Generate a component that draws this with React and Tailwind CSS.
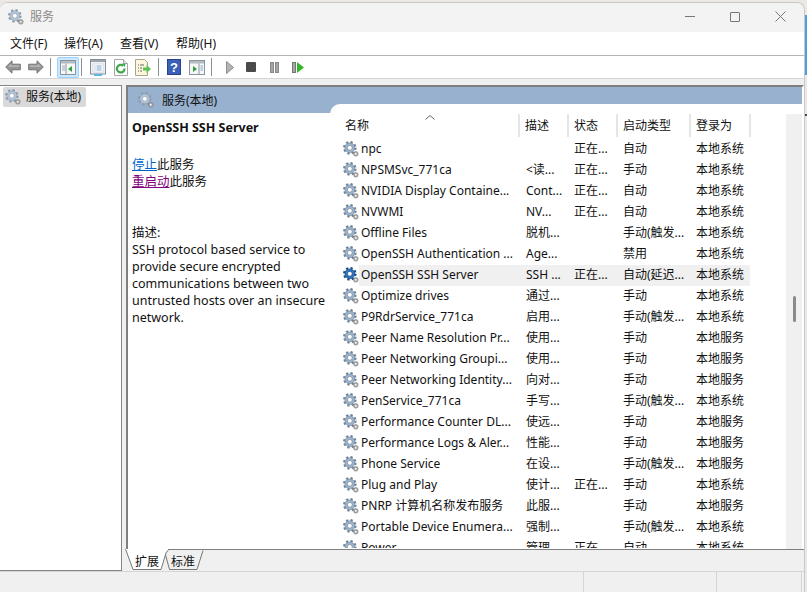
import React from 'react';

const FONT = "font-['Segoe_UI','Noto_Sans','Noto_Sans_CJK_SC',sans-serif]";

const rows = [
    ['npc', '', '正在...', '自动', '本地系统'],
    ['NPSMSvc_771ca', '<读...', '正在...', '手动', '本地系统'],
    ['NVIDIA Display Containe...', 'Cont...', '正在...', '自动', '本地系统'],
    ['NVWMI', 'NV...', '正在...', '自动', '本地系统'],
    ['Offline Files', '脱机...', '', '手动(触发...', '本地系统'],
    ['OpenSSH Authentication ...', 'Age...', '', '禁用', '本地系统'],
    ['OpenSSH SSH Server', 'SSH ...', '正在...', '自动(延迟...', '本地系统'],
    ['Optimize drives', '通过...', '', '手动', '本地系统'],
    ['P9RdrService_771ca', '启用...', '', '手动(触发...', '本地系统'],
    ['Peer Name Resolution Pr...', '使用...', '', '手动', '本地服务'],
    ['Peer Networking Groupi...', '使用...', '', '手动', '本地服务'],
    ['Peer Networking Identity...', '向对...', '', '手动', '本地服务'],
    ['PenService_771ca', '手写...', '', '手动(触发...', '本地系统'],
    ['Performance Counter DL...', '使远...', '', '手动', '本地服务'],
    ['Performance Logs & Aler...', '性能...', '', '手动', '本地服务'],
    ['Phone Service', '在设...', '', '手动(触发...', '本地服务'],
    ['Plug and Play', '使计...', '正在...', '手动', '本地系统'],
    ['PNRP 计算机名称发布服务', '此服...', '', '手动', '本地服务'],
    ['Portable Device Enumera...', '强制...', '', '手动(触发...', '本地系统'],
    ['Power', '管理...', '正在...', '自动', '本地系统'],
];

const Gear = ({ size = 16, selected = false, muted = false, className = '' }) => {
    const main = selected ? '#2f74bd' : muted ? '#b4c6d8' : '#9db4cc';
    const dark = selected ? '#174a86' : muted ? '#8a9bad' : '#6f8398';
    return (
        <svg width={size} height={size} viewBox="0 0 16 16" className={`shrink-0 ${className}`}>
            <circle cx="6.800" cy="6.800" r="5.600" fill="none" stroke={dark} strokeWidth="2.400" strokeDasharray="2.200 2.200" />
            <circle cx="6.800" cy="6.800" r="4.900" fill={main} stroke={dark} strokeWidth=".6" />
            <circle cx="6.800" cy="6.800" r="2.400" fill="#fff" stroke={dark} strokeWidth=".6" />
            <circle cx="12.800" cy="12.800" r="2.400" fill="#a9a9a9" stroke="#777" strokeWidth=".5" />
            <circle cx="12.800" cy="12.800" r=".9" fill="#fff" />
        </svg>
    );
};

const Arrow = ({ flip = false, className = '' }) => (
    <svg width="16" height="14" viewBox="0 0 16 14" className={`${flip ? '-scale-x-100' : ''} ${className}`}>
        <path d="M.7 7 7 .8v3.400h8.300v5.600H7v3.400z" fill="#949494" stroke="#757575" />
        <path d="M3 7 6.300 3.800v1.600h8v1.400H5z" fill="#bdbdbd" />
    </svg>
);

const Sep = ({ className = '' }) => <div className={`w-px h-[18px] bg-[#8f8f8f] shrink-0 ${className}`} />;

const WindowIcon = ({ children }) => (
    <svg width="16" height="15" viewBox="0 0 16 15">
        <rect x=".5" y=".5" width="15" height="14" fill="#f6f7f8" stroke="#8b949c" />
        <rect x="1" y="1" width="14" height="2.500" fill="#b4bcc3" />
        {children}
    </svg>
);

const Toolbar = () => (
    <div className="flex items-center h-[23px] bg-white border-b border-[#d6d6d6] pl-[5px] shrink-0">
        <Arrow />
        <Arrow flip className="ml-[7px]" />
        <Sep className="ml-[6px]" />
        <div className="flex items-center justify-center w-[22px] h-[21px] ml-[6px] bg-[#cce8ff] border border-[#99d1ff] rounded-[2px]">
            <WindowIcon>
                <path d="M6 3.500v11" stroke="#8b949c" />
                <path d="M12 6v6L8 9z" fill="#2f9e3f" />
                <path d="M2 6h3M2 8h3M2 10h3" stroke="#9ab" />
            </WindowIcon>
        </div>
        <Sep className="ml-[2px]" />
        <svg width="16" height="17" viewBox="0 0 16 17" className="ml-[8px]">
            <rect x=".5" y=".5" width="15" height="14.500" fill="#eef1f4" stroke="#858e96" />
            <rect x="1" y="1" width="14" height="2" fill="#9ca5ad" />
            <rect x="3" y="5" width="10" height="8" fill="#fff" stroke="#c0c6cb" strokeWidth=".5" />
            <path d="M4.500 7h1M6.500 7h5M4.500 9h1M6.500 9h5M4.500 11h1M6.500 11h5" stroke="#7ba3cb" />
            <rect x="4" y="15" width="8" height="2" fill="#5bb3e8" />
        </svg>
        <svg width="14" height="17" viewBox="0 0 14 17" className="ml-[8px]">
            <path d="M.5.5h9l4 4v12H.5z" fill="#fff" stroke="#a5a5a5" />
            <path d="M9.500.5v4h4" fill="#e8e8e8" stroke="#a5a5a5" />
            <path d="M10.500 9.500a3.800 3.800 0 1 1-1.300-2.700" fill="none" stroke="#3fa64c" strokeWidth="2.200" />
            <path d="M8 4.500l3.400.3-.4 3.500z" fill="#3fa64c" />
        </svg>
        <svg width="16" height="17" viewBox="0 0 16 17" className="ml-[7px]">
            <path d="M.5.5h9l3 3v13H.5z" fill="#fbf6dc" stroke="#aaa48a" />
            <path d="M3 6h1M5 6h4M3 9h1M5 9h2M3 12h1M5 12h2" stroke="#666" />
            <path d="M8 8.500h3.500V6l4.500 4-4.500 4v-2.500H8z" fill="#5cc058" />
        </svg>
        <Sep className="ml-[7px]" />
        <svg width="14" height="16" viewBox="0 0 14 16" className="ml-[8px]">
            <rect x=".5" y=".5" width="13" height="15" fill="#3a60b8" stroke="#2a4288" />
            <text x="7" y="12.500" textAnchor="middle" fontSize="13" fontWeight="700" fill="#fff" fontFamily="Liberation Sans">?</text>
        </svg>
        <div className="ml-[8px] flex">
            <WindowIcon>
                <path d="M10 3.500v11" stroke="#8b949c" />
                <path d="M4 6v6l4-3z" fill="#2f9e3f" />
                <path d="M11.500 6h2.500M11.500 8h2.500M11.500 10h2.500" stroke="#7ba3cb" />
            </WindowIcon>
        </div>
        <Sep className="ml-[6px]" />
        <svg width="8" height="13" viewBox="0 0 8 13" className="ml-[14px]">
            <path d="M.5.5 7.500 6.500.5 12.500z" fill="#b4b4b4" stroke="#8f8f8f" />
        </svg>
        <div className="w-[10px] h-[10px] ml-[12px] bg-[#4a4a4a] rounded-[1px]" />
        <svg width="9" height="11" viewBox="0 0 9 11" className="ml-[14px]">
            <rect x=".5" y=".5" width="3" height="10" fill="#a5a5a5" stroke="#888" />
            <rect x="5.500" y=".5" width="3" height="10" fill="#a5a5a5" stroke="#888" />
        </svg>
        <svg width="12" height="11" viewBox="0 0 12 11" className="ml-[13px]">
            <rect x=".5" y=".5" width="3" height="10" fill="#a5a5a5" stroke="#777" />
            <path d="M5 0l7 5.500L5 11z" fill="#35b52b" />
        </svg>
    </div>
);

const Row = ({ row }) => {
    const selected = row[0] === 'OpenSSH SSH Server';
    return (
        <div className="flex h-[21px] items-center whitespace-nowrap">
            <div className="w-[29px] pl-[13px] pb-[2px] shrink-0">
                <Gear selected={selected} />
            </div>
            <div className={`flex h-full items-center w-[391px] pb-[2px] leading-[16px] ${selected ? 'bg-[#f0f0f0]' : ''}`}>
                <div className="w-[167px] pl-[2px] shrink-0">{row[0]}</div>
                <div className="w-[48px] shrink-0">{row[1]}</div>
                <div className="w-[49px] shrink-0">{row[2]}</div>
                <div className="w-[73px] shrink-0">{row[3]}</div>
                <div className="w-[50px] shrink-0">{row[4]}</div>
            </div>
        </div>
    );
};

const HeaderCell = ({ className, children }) => (
    <div className={`h-full flex items-center pl-[5px] border-r-2 border-[#e5e5e5] shrink-0 ${className}`}>{children}</div>
);

const App = () => {
    return (
        <div className={`relative w-[807px] h-[592px] bg-[#ece9e4] pt-[2px] pr-[2px] overflow-hidden text-[12px] leading-none text-[#111] ${FONT}`}>
            <div className="absolute right-0 top-[15px] w-[2px] h-[60px] bg-[#4a9fdc]" />
            <div className="absolute right-0 top-[114px] w-[2px] h-[2px] bg-[#33475f]" />
            <div className="flex flex-col h-[590px] bg-[#f0f0f0] rounded-t-lg border-t border-r border-[#c8c8c8] overflow-hidden">
                <div className="flex items-center h-[29px] bg-[#f3f3f3] pl-[8px] pb-[2px] shrink-0">
                    <Gear size={16} muted />
                    <span className="ml-[6px] text-[#8a8a8a]">服务</span>
                    <div className="flex items-center ml-auto">
                        <div className="w-[10px] h-px bg-[#777] mr-[35px]" />
                        <div className="w-[10px] h-[10px] border border-[#777] rounded-[1px] mr-[35px]" />
                        <svg width="11" height="11" viewBox="0 0 11 11" className="mr-[18px]">
                            <path d="M.5.5l10 10M10.500.5l-10 10" stroke="#777" />
                        </svg>
                    </div>
                </div>
                <div className="flex items-center h-[24px] bg-white border-b border-[#b4b4b4] pl-[10px] pt-[1px] shrink-0">
                    <span className="w-[54px]">文件(F)</span>
                    <span className="w-[56px]">操作(A)</span>
                    <span className="w-[56px]">查看(V)</span>
                    <span>帮助(H)</span>
                </div>
                <Toolbar />
                <div className="flex flex-1 min-h-0 pt-[6px]">
                    <div className="w-[122px] h-[486px] bg-white border-t border-r border-b border-[#82878c] shrink-0">
                        <div className="flex items-center w-[83px] h-[20px] mt-[1px] ml-[3px] pl-[2px] bg-[#d9d9d9] rounded-[2px]">
                            <Gear size={16} muted />
                            <span className="ml-[5px]">服务(本地)</span>
                        </div>
                    </div>
                    <div className="flex flex-col ml-[4px] flex-1 min-w-0">
                        <div className="flex flex-col h-[464px] border-t-2 border-l-2 border-r-2 border-t-[#7f7f7f] border-l-[#7f7f7f] border-r-white bg-white shrink-0">
                            <div className="flex items-center h-[26px] bg-[#97b1cf] pl-[10px] shrink-0">
                                <Gear size={16} muted />
                                <span className="ml-[8px] pt-[2px]">服务(本地)</span>
                            </div>
                            <div className="flex flex-1 min-h-0">
                                <div className="w-[202px] shrink-0 pl-[4px] pt-[6px] text-[12.500px] leading-[17px]">
                                    <div className="font-bold h-[36px]">OpenSSH SSH Server</div>
                                    <div className="mt-[1px]"><a className="text-[#0066cc] underline">停止</a>此服务</div>
                                    <div><a className="text-[#800080] underline">重启动</a>此服务</div>
                                    <div className="mt-[34px]">描述:</div>
                                    <div className="w-[198px]">SSH protocol based service to provide secure encrypted communications between two untrusted hosts over an insecure network.</div>
                                </div>
                                <div className="relative flex-1 min-w-0 -mt-[9px] bg-white rounded-tl-[10px] overflow-hidden z-10">
                                    <div className="flex">
                                        <div className="w-[456px] min-w-0">
                                            <div className="flex items-center h-[35px] pt-[10px] pb-[2px] pl-[10px]">
                                                <HeaderCell className="w-[180px] relative">
                                                    <svg width="10" height="5" viewBox="0 0 10 5" className="absolute left-[85px] top-[1px]">
                                                        <path d="M.5 4.500 5 .5l4.500 4" fill="none" stroke="#666" />
                                                    </svg>
                                                    名称
                                                </HeaderCell>
                                                <HeaderCell className="w-[49px]">描述</HeaderCell>
                                                <HeaderCell className="w-[49px]">状态</HeaderCell>
                                                <HeaderCell className="w-[73px]">启动类型</HeaderCell>
                                                <HeaderCell className="w-[60px]">登录为</HeaderCell>
                                            </div>
                                            <div className="h-[409px] overflow-hidden">
                                                {rows.map((row) => <Row key={row[0]} row={row} />)}
                                            </div>
                                        </div>
                                        <div className="relative w-[16px] h-[435px] mt-[10px] ml-auto bg-[#f0f0f0] shrink-0">
                                            <div className="absolute left-[7px] top-[182px] w-[3px] h-[26px] rounded bg-[#8a8a8a]" />
                                        </div>
                                    </div>
                                </div>
                            </div>
                        </div>
                        <div className="relative flex h-[22px] border-t border-[#7f7f7f] pl-[9px] pt-[6px] shrink-0">
                            <svg width="80" height="22" viewBox="0 0 80 22" className="absolute left-[-1px] top-[-1px]">
                                <path d="M40 4 44.500 20.500H72L78 1.500" fill="#f0f0f0" stroke="#777" />
                                <path d="M.5 0 8 20.500H36L41 4 44 0" fill="#fff" stroke="#777" />
                                <path d="M1 .5h42" stroke="#fff" />
                            </svg>
                            <span className="relative z-10">扩展</span>
                            <span className="relative z-10 ml-[12px]">标准</span>
                        </div>
                    </div>
                </div>
                <div className="flex h-[21px] border-t border-[#d5d5d5] shrink-0 bg-[#f0f0f0]">
                    <div className="w-[583px]" />
                    <div className="w-[133px] border-l border-[#d5d5d5]" />
                    <div className="w-[85px] border-l border-[#d5d5d5]" />
                    <div className="border-l border-[#d5d5d5] flex-1" />
                </div>
            </div>
        </div>
    );
};

export default App;
